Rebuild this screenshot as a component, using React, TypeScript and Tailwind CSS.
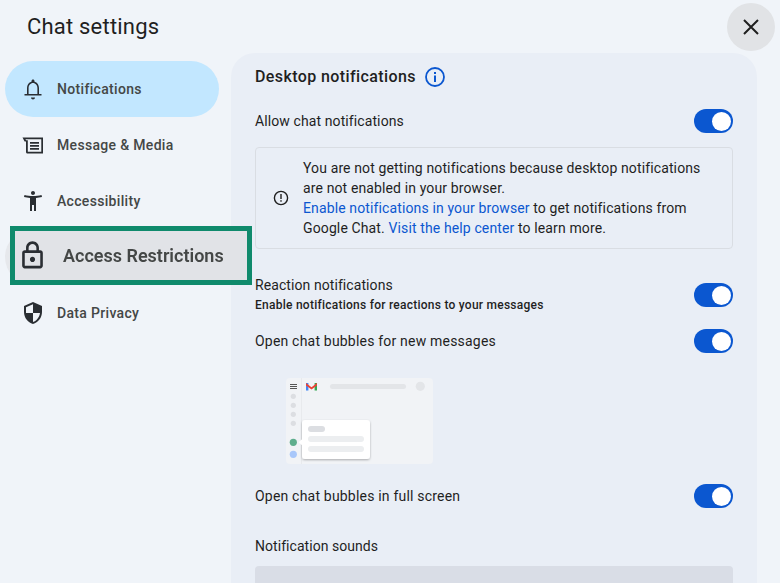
const font = { fontFamily: '"Roboto", "Liberation Sans", sans-serif' };

function Toggle() {
  return (
    <div className="w-[39px] h-6 rounded-full bg-[#0b57d0] flex items-center justify-end pr-[2.5px] shrink-0">
      <div className="w-[19px] h-[19px] rounded-full bg-white" />
    </div>
  );
}

function Icon({ d, className }: { d: string; className?: string }) {
  return (
    <svg viewBox="0 0 24 24" className={className ?? "w-6 h-6"} fill="#2a2e33">
      <path d={d} fillRule="evenodd" />
    </svg>
  );
}

const BELL = "M12 22.5c1.1 0 2-.9 2-2h-4c0 1.1.9 2 2 2zM18 17v-6c0-3.07-1.63-5.64-4.5-6.32V4c0-.83-.67-1.5-1.5-1.5s-1.5.67-1.5 1.5v.68C7.64 5.36 6 7.92 6 11v6H3.5v1.6h17V17H18zm-1.6 0H7.6v-6c0-2.48 1.91-4.9 4.4-4.9s4.4 2.42 4.4 4.9v6z";
const MESSAGE = "M1.5 4.5H22v16H6.5c-.9 0-1.5-.6-1.5-1.5V8.5H3.6L1.5 4.5zM4.4 6.2l.7 1h1.7v11.6h13.5V6.2H4.4zM9 9h9v1.7H9V9zm0 3h9v1.7H9V12zm0 3h9v1.7H9V15z";
const ACCESS = "M20.5 6c-2.61.7-5.67 1-8.5 1s-5.89-.3-8.5-1L3 8c1.86.5 4 .83 6 1v13h2v-6h2v6h2V9c2-.17 4.14-.5 6-1l-.5-2zM12 6c1.1 0 2-.9 2-2s-.9-2-2-2-2 .9-2 2 .9 2 2 2z";
const LOCK = "M18 8h-1V6c0-2.76-2.24-5-5-5S7 3.24 7 6v2H6c-1.1 0-2 .9-2 2v10c0 1.1.9 2 2 2h12c1.1 0 2-.9 2-2V10c0-1.1-.9-2-2-2zM9 6c0-1.66 1.34-3 3-3s3 1.34 3 3v2H9V6zm9 14H6V10h12v10zm-6-3c1.1 0 2-.9 2-2s-.9-2-2-2-2 .9-2 2 .9 2 2 2z";
const SHIELD = "M12 1L3 5v6c0 5.55 3.84 10.74 9 12 5.16-1.26 9-6.45 9-12V5l-9-4zm0 10.99h7c-.53 4.12-3.28 7.79-7 8.94V12H5V6.3l7-3.11v8.8z";

function NavItem({ d, label, active }: { d: string; label: string; active?: boolean }) {
  return (
    <div className={`h-14 rounded-full flex items-center pl-4 gap-[12px] ${active ? "bg-[#c2e7ff]" : ""}`}>
      <Icon d={d} />
      <span className="text-[14px] font-[470] text-[#444746] tracking-[0.32px]">{label}</span>
    </div>
  );
}

function Illustration() {
  return (
    <svg width="147" height="86" viewBox="0 0 147 86" className="block">
      <defs>
        <filter id="s" x="-20%" y="-20%" width="140%" height="150%">
          <feDropShadow dx="0" dy="1" stdDeviation="1.2" floodColor="#000" floodOpacity="0.3" />
        </filter>
      </defs>
      <rect width="147" height="86" rx="4" fill="#f1f3f6" />
      <rect x="15" width="0.8" height="86" fill="#e6e8ec" />
      <rect x="4" y="6" width="7" height="0.9" fill="#444" />
      <rect x="4" y="8" width="7" height="0.9" fill="#444" />
      <rect x="4" y="10" width="7" height="0.9" fill="#444" />
      {[18.3, 27.3, 36.3, 45.3].map((y) => (
        <circle key={y} cx="7.3" cy={y} r="2.6" fill="#dcdee2" />
      ))}
      <circle cx="7.3" cy="64.3" r="3.6" fill="#5fae8d" />
      <circle cx="7.3" cy="76.3" r="3.6" fill="#a8c7fa" />
      <rect x="20" y="5" width="2.4" height="7.5" fill="#4285f4" />
      <rect x="28.6" y="5" width="2.4" height="7.5" fill="#34a853" />
      <path d="M20 5l5.5 4.2L31 5v2.6l-5.5 4-5.5-4z" fill="#ea4335" />
      <rect x="44" y="6" width="76" height="5" rx="2.5" fill="#e3e5e8" />
      <circle cx="134.3" cy="8.3" r="4.6" fill="#e3e5e8" />
      <rect x="16" y="42" width="68" height="39" rx="3" fill="#fff" filter="url(#s)" />
      <path d="M17 60.5l-4.5 3.8 4.5 3.8z" fill="#fff" />
      <rect x="22" y="48" width="17" height="6" rx="3" fill="#dcdee2" />
      <rect x="22" y="58" width="56" height="6" rx="3" fill="#eceef0" />
      <rect x="22" y="68" width="56" height="6" rx="3" fill="#eceef0" />
    </svg>
  );
}

export default function App() {
  return (
    <div style={font} className="w-[780px] h-[583px] overflow-hidden bg-[#f0f4f9] flex flex-col text-[#1f1f1f]">
      <div className="h-[53px] flex items-center justify-between pl-[27px] pr-[5px] shrink-0">
        <h1 className="text-[22px] leading-7 font-normal tracking-[0.2px]">Chat settings</h1>
        <button className="w-12 h-12 rounded-full bg-[#e1e3e6] flex items-center justify-center">
          <svg width="24" height="24" viewBox="0 0 24 24" fill="none" stroke="#1f1f1f" strokeWidth="2">
            <path d="M5 5l14 14M19 5L5 19" />
          </svg>
        </button>
      </div>
      <div className="flex flex-1 min-h-0">
        <nav className="w-[214px] ml-[5px] mr-[12px] pt-2 shrink-0">
          <NavItem d={BELL} label="Notifications" active />
          <NavItem d={MESSAGE} label="Message & Media" />
          <NavItem d={ACCESS} label="Accessibility" />
          <div className="relative h-14 rounded-full bg-[#e6e8ec]">
            <div className="absolute left-[5px] top-[-3px] w-[242px] h-[59px] border-[5.5px] border-[#0f8a6c] bg-[#e1e3e7] flex items-center pl-[2px]">
              <Icon d={LOCK} className="w-[31px] h-[31px]" />
              <span className="ml-[15px] mb-[1px] text-[18px] font-semibold text-[#444746] tracking-[0px] blur-[0.3px]">Access Restrictions</span>
            </div>
          </div>
          <NavItem d={SHIELD} label="Data Privacy" />
        </nav>
        <main className="w-[526px] bg-[#e9eef6] rounded-t-[24px] pt-3 pl-[24px] pr-[24px] overflow-hidden">
          <div className="h-6 flex items-center gap-[9px]">
            <h2 className="text-[16px] font-medium tracking-[0.4px]">Desktop notifications</h2>
            <svg width="22" height="22" viewBox="0 0 22 22" fill="none" className="-ml-[1px]">
              <circle cx="11" cy="11" r="9" stroke="#0b57d0" strokeWidth="1.8" />
              <rect x="10" y="9.5" width="2" height="6.5" fill="#0b57d0" />
              <rect x="10" y="6" width="2" height="2" fill="#0b57d0" />
            </svg>
          </div>
          <div className="mt-5 h-6 flex items-center justify-between">
            <span className="text-[14px] tracking-[0.1px]">Allow chat notifications</span>
            <Toggle />
          </div>
          <div className="mt-[14px] h-[102px] rounded-[4px] border border-[#d9dde3] flex items-center pl-[18px] pr-4">
            <svg width="16" height="16" viewBox="0 0 16 16" fill="none" className="shrink-0 -ml-[1px]">
              <circle cx="8" cy="8" r="6.6" stroke="#1f1f1f" strokeWidth="1.4" />
              <rect x="7.3" y="4" width="1.4" height="5" fill="#1f1f1f" />
              <rect x="7.3" y="10.2" width="1.4" height="1.5" fill="#1f1f1f" />
            </svg>
            <p className="ml-[14px] text-[14px] leading-5 tracking-[0.125px]">
              You are not getting notifications because desktop notifications
              <br />
              are not enabled in your browser.
              <br />
              <span className="text-[#0b57d0]">Enable notifications in your browser</span> to get notifications from
              <br />
              Google Chat. <span className="text-[#0b57d0]">Visit the help center</span> to learn more.
            </p>
          </div>
          <div className="mt-[26px] h-10 flex items-center justify-between">
            <div>
              <div className="text-[14px] leading-5 tracking-[0.08px]">Reaction notifications</div>
              <div className="text-[12px] leading-5 font-medium tracking-[0.25px]">Enable notifications for reactions to your messages</div>
            </div>
            <Toggle />
          </div>
          <div className="mt-[14px] h-6 flex items-center justify-between">
            <span className="text-[14px] tracking-[0.2px]">Open chat bubbles for new messages</span>
            <Toggle />
          </div>
          <div className="mt-[25px] ml-[31px]">
            <Illustration />
          </div>
          <div className="mt-5 h-6 flex items-center justify-between">
            <span className="text-[14px] tracking-[0.2px]">Open chat bubbles in full screen</span>
            <Toggle />
          </div>
          <div className="mt-7 h-5 flex items-center text-[14px] tracking-[0.05px]">Notification sounds</div>
          <div className="mt-2.5 h-10 rounded-[4px] bg-[#d9dde6]" />
        </main>
      </div>
    </div>
  );
}
